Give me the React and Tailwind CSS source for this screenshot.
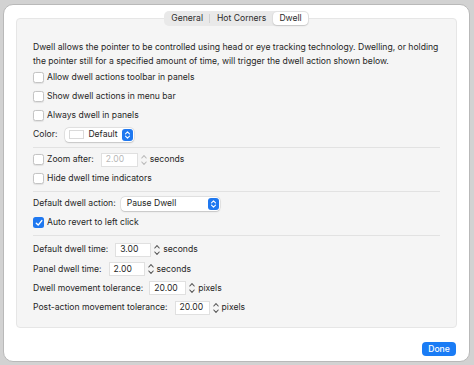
import React from 'react'

const font = { fontFamily: 'Inter, "Liberation Sans", sans-serif' }

function Checkbox({ checked }) {
  if (checked) {
    return (
      <span className="flex h-[11px] w-[11px] shrink-0 items-center justify-center rounded-[2.5px] bg-[#1f78f0]">
        <svg width="8" height="8" viewBox="0 0 8 8">
          <path d="M1.3 4.2 L3.2 6.1 L6.8 1.6" fill="none" stroke="white" strokeWidth="1.4" strokeLinecap="round" strokeLinejoin="round" />
        </svg>
      </span>
    )
  }
  return <span className="h-[11px] w-[11px] shrink-0 rounded-[2.5px] border border-[#c4c4c4] bg-white shadow-[0_0.5px_1px_rgba(0,0,0,0.08)]" />
}

function CheckRow({ label, checked }) {
  return (
    <div className="flex h-[19px] items-center gap-[3px]">
      <Checkbox checked={checked} />
      <span>{label}</span>
    </div>
  )
}

function Stepper({ disabled }) {
  const c = disabled ? '#b9b9b9' : '#555'
  return (
    <svg width="8" height="14" viewBox="0 0 8 14" className="shrink-0">
      <path d="M1.8 5 L4 2.6 L6.2 5" fill="none" stroke={c} strokeWidth="1.1" strokeLinecap="round" strokeLinejoin="round" />
      <path d="M1.8 9 L4 11.4 L6.2 9" fill="none" stroke={c} strokeWidth="1.1" strokeLinecap="round" strokeLinejoin="round" />
    </svg>
  )
}

function BlueArrows() {
  return (
    <span className="flex h-[12px] w-[11px] items-center justify-center rounded-[3px] bg-[#1f78f0]">
      <svg width="7" height="10" viewBox="0 0 7 10">
        <path d="M1.5 3.8 L3.5 1.9 L5.5 3.8" fill="none" stroke="white" strokeWidth="1.1" strokeLinecap="round" strokeLinejoin="round" />
        <path d="M1.5 6.2 L3.5 8.1 L5.5 6.2" fill="none" stroke="white" strokeWidth="1.1" strokeLinecap="round" strokeLinejoin="round" />
      </svg>
    </span>
  )
}

function NumField({ value, width, disabled }) {
  return (
    <div className="flex items-center gap-[2px]">
      <div
        className={`flex h-[14px] items-center border border-[#e0e0e0] bg-white px-[4px] ${disabled ? 'text-[#b8b8b8]' : ''} ${width}`}
      >
        {value}
      </div>
      <Stepper disabled={disabled} />
    </div>
  )
}

function NumRow({ label, value, width, unit, gap }) {
  return (
    <div className="flex h-[19.3px] items-center">
      <span>{label}</span>
      <div className={gap}>
        <NumField value={value} width={width} />
      </div>
      <span className="ml-[2px]">{unit}</span>
    </div>
  )
}

function Sep() {
  return <div className="my-[2.5px] mr-[16px] h-px bg-[#e2e2e2]" />
}

export default function App() {
  return (
    <div className="h-[365px] w-[474px] overflow-hidden bg-[#d2d2d2] pl-[3px] pr-[4px] pt-[4px] text-[8.6px] text-[#262626]" style={font}>
      <div className="flex h-[358px] flex-col rounded-[10px] border border-[#b9b9b9] bg-white pl-[12px] pr-[12px] pt-[13px]">
        <div className="rounded-[4px] border border-[#e6e6e6] bg-[#f5f5f5] pb-[10px] pl-[16px]">
          <div className="-mt-[8px] flex justify-center pr-[16px]">
            <div className="flex h-[15px] items-center rounded-[5px] bg-[#e9e9e9] p-[1px] text-[#2b2b2b]">
              <span className="px-[6.5px]">General</span>
              <span className="h-[9px] w-px bg-[#d2d2d2]" />
              <span className="px-[6.5px]">Hot Corners</span>
              <span className="flex h-full items-center rounded-[4px] bg-white px-[6.5px] shadow-[0_0.5px_1.5px_rgba(0,0,0,0.25)]">Dwell</span>
            </div>
          </div>
          <p className="mt-[14px] pr-[16px] leading-[14px]">
            Dwell allows the pointer to be controlled using head or eye tracking technology. Dwelling, or holding
            the pointer still for a specified amount of time, will trigger the dwell action shown below.
          </p>
          <CheckRow label="Allow dwell actions toolbar in panels" />
          <CheckRow label="Show dwell actions in menu bar" />
          <CheckRow label="Always dwell in panels" />
          <div className="flex h-[19px] items-center">
            <span>Color:</span>
            <div className="ml-[8px] flex h-[14px] w-[69px] items-center rounded-[4px] bg-white pl-[4px] pr-[1px] shadow-[0_0_0_0.5px_rgba(0,0,0,0.12),0_0.5px_1.5px_rgba(0,0,0,0.15)]">
              <span className="h-[9px] w-[15px] border border-[#dadada] bg-white" />
              <span className="ml-[4px] flex-1">Default</span>
              <BlueArrows />
            </div>
          </div>
          <Sep />
          <div className="flex h-[19px] items-center">
            <Checkbox />
            <span className="ml-[3px]">Zoom after:</span>
            <div className="ml-[7px]">
              <NumField value="2.00" width="w-[37px]" disabled />
            </div>
            <span className="ml-[2px]">seconds</span>
          </div>
          <CheckRow label="Hide dwell time indicators" />
          <Sep />
          <div className="flex h-[19px] items-center">
            <span>Default dwell action:</span>
            <div className="ml-[5px] flex h-[14px] w-[99px] items-center rounded-[4px] bg-white pl-[6px] pr-[1px] shadow-[0_0_0_0.5px_rgba(0,0,0,0.12),0_0.5px_1.5px_rgba(0,0,0,0.15)]">
              <span className="flex-1">Pause Dwell</span>
              <BlueArrows />
            </div>
          </div>
          <CheckRow label="Auto revert to left click" checked />
          <Sep />
          <div className="pt-[2px]">
            <NumRow label="Default dwell time:" value="3.00" width="w-[36px]" unit="seconds" gap="ml-[7px]" />
            <NumRow label="Panel dwell time:" value="2.00" width="w-[36px]" unit="seconds" gap="ml-[7px]" />
            <NumRow label="Dwell movement tolerance:" value="20.00" width="w-[37px]" unit="pixels" gap="ml-[6px]" />
            <NumRow label="Post-action movement tolerance:" value="20.00" width="w-[35px]" unit="pixels" gap="ml-[7px]" />
          </div>
        </div>
        <div className="mt-[14px] flex justify-end pr-[1px]">
          <button className="flex h-[14px] w-[34px] items-center justify-center rounded-[4px] bg-[#1a7cf5] font-medium text-white">
            Done
          </button>
        </div>
      </div>
    </div>
  )
}
